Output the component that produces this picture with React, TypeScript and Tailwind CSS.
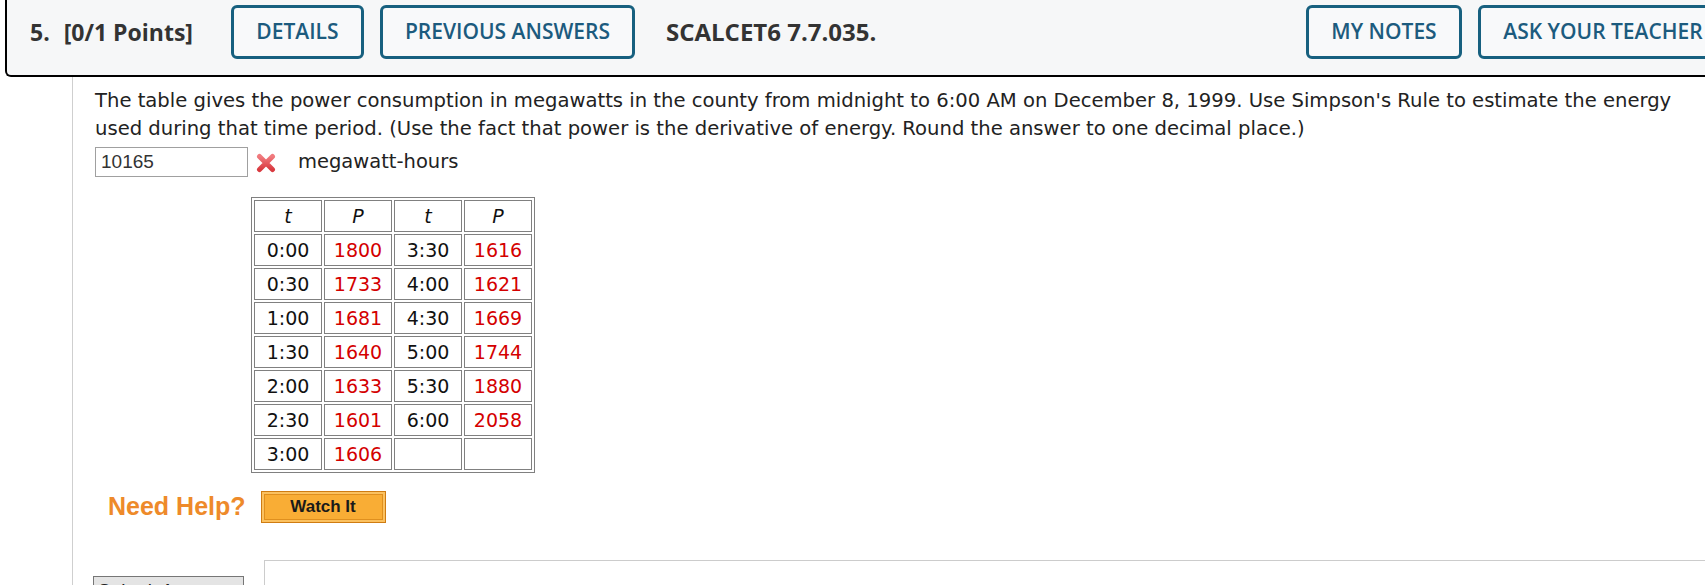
import React from "react";

const rowsLeft = [
  ["0:00", "1800"],
  ["0:30", "1733"],
  ["1:00", "1681"],
  ["1:30", "1640"],
  ["2:00", "1633"],
  ["2:30", "1601"],
  ["3:00", "1606"],
];

const rowsRight = [
  ["3:30", "1616"],
  ["4:00", "1621"],
  ["4:30", "1669"],
  ["5:00", "1744"],
  ["5:30", "1880"],
  ["6:00", "2058"],
];

const headBtn =
  "flex h-[54px] shrink-0 items-center justify-center rounded-[6px] border-[3px] border-[#17607f] bg-[#f8f9fa] text-[21px] font-semibold text-[#1c5b7e]";

function Header() {
  return (
    <div className="ml-[5px] flex h-[77px] w-[1750px] items-center rounded-bl-[6px] border-b-2 border-l-2 border-black bg-[#f6f7f8] pb-[11px] pl-[23px] pr-[27px] font-['Open_Sans',sans-serif] text-[#333]">
      <span className="text-[23px] font-bold">5.</span>
      <span className="ml-[14px] text-[23px] font-bold">[0/1 Points]</span>
      <button type="button" className={`${headBtn} ml-[38px] w-[133px]`}>
        DETAILS
      </button>
      <button type="button" className={`${headBtn} ml-[16px] w-[255px]`}>
        PREVIOUS ANSWERS
      </button>
      <span className="ml-[31px] text-[24px] font-bold">SCALCET6 7.7.035.</span>
      <button type="button" className={`${headBtn} ml-auto w-[156px]`}>
        MY NOTES
      </button>
      <button type="button" className={`${headBtn} ml-[16px] w-[250px]`}>
        ASK YOUR TEACHER
      </button>
    </div>
  );
}

function WrongMark() {
  return (
    <svg width="20" height="20" viewBox="0 0 20 20" className="shrink-0">
      <defs>
        <linearGradient id="xg" x1="0" y1="0" x2="0" y2="1">
          <stop offset="0" stopColor="#f07a7e" />
          <stop offset="1" stopColor="#d93a40" />
        </linearGradient>
      </defs>
      <path d="M3.5 3.5 L16.5 16.5 M16.5 3.5 L3.5 16.5" stroke="url(#xg)" strokeWidth="5" strokeLinecap="round" />
    </svg>
  );
}

const cell = "h-[32px] w-[68px] border border-[#808080] p-0 text-center";

function PowerTable() {
  return (
    <table className="ml-[156px] mt-[20px] border-separate border-spacing-[2px] border border-[#808080] font-['DejaVu_Sans',sans-serif] text-[19px] text-[#111]">
      <tbody>
        <tr>
          <td className={`${cell} italic`}>t</td>
          <td className={`${cell} italic`}>P</td>
          <td className={`${cell} italic`}>t</td>
          <td className={`${cell} italic`}>P</td>
        </tr>
        {rowsLeft.map(([t, p], i) => (
          <tr key={t}>
            <td className={cell}>{t}</td>
            <td className={`${cell} text-[#d40000]`}>{p}</td>
            <td className={cell}>{rowsRight[i]?.[0] ?? ""}</td>
            <td className={`${cell} text-[#d40000]`}>{rowsRight[i]?.[1] ?? ""}</td>
          </tr>
        ))}
      </tbody>
    </table>
  );
}

export default function App() {
  return (
    <div className="h-[585px] w-[1705px] overflow-hidden bg-white">
      <Header />
      <div className="ml-[72px] h-[600px] border-l border-[#cfcfcf] pl-[22px] pt-[10px]">
        <p className="pr-[12px] font-['DejaVu_Sans',sans-serif] text-[19.6px] leading-[28px] text-[#222]">
          The table gives the power consumption in megawatts in the county from midnight to 6:00 AM on December 8,
          1999. Use Simpson's Rule to estimate the energy used during that time period. (Use the fact that power is
          the derivative of energy. Round the answer to one decimal place.)
        </p>
        <div className="mt-[4px] flex items-center">
          <input
            readOnly
            defaultValue="10165"
            className="h-[30px] w-[153px] border border-[#a0a0a0] bg-white px-[5px] font-['Liberation_Sans',sans-serif] text-[19px] text-[#333] outline-none"
          />
          <span className="ml-[8px] mt-[2px] flex">
            <WrongMark />
          </span>
          <span className="ml-[22px] font-['DejaVu_Sans',sans-serif] text-[19.5px] text-[#222]">megawatt-hours</span>
        </div>
        <PowerTable />
        <div className="mt-[15px] flex items-center">
          <span className="ml-[13px] font-['Liberation_Sans',sans-serif] text-[25px] font-bold text-[#ee8a2a]">
            Need Help?
          </span>
          <button
            type="button"
            className="ml-[15px] flex h-[32px] w-[125px] items-center justify-center border border-[#cf7c12] bg-[#f9ad35] font-['Liberation_Sans',sans-serif] text-[17px] font-bold text-[#1a1a1a] shadow-[inset_0_0_0_2px_#fbc160,inset_0_0_0_3px_#df8f1e]"
          >
            Watch It
          </button>
        </div>
        <div className="mt-[34px] flex items-start">
          <button
            type="button"
            className="-ml-[2px] mt-[16px] w-[151px] border border-[#767676] bg-[#e4e4e4] px-[4px] py-[2px] text-left font-['Liberation_Sans',sans-serif] text-[19px] leading-[24px] text-[#222]"
          >
            Submit Answer
          </button>
          <div className="ml-[20px] h-[80px] flex-1 border-l border-t border-[#cccccc]" />
        </div>
      </div>
    </div>
  );
}
